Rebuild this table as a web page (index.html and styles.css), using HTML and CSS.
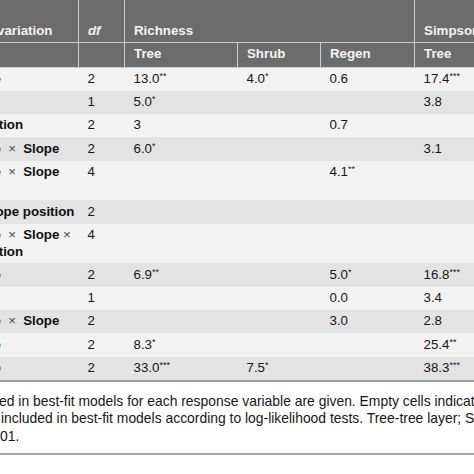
FILE: index.html
```html
<!DOCTYPE html>
<html lang="en">
<head>
<meta charset="utf-8">
<title>ANOVA table</title>
<link rel="stylesheet" href="styles.css">
</head>
<body>
<div class="frame">
  <table class="anova">
    <colgroup>
      <col class="c-src"><col class="c-df"><col class="c-rt"><col class="c-rs"><col class="c-rr"><col class="c-st"><col class="c-ss"><col class="c-sr">
    </colgroup>
    <thead>
      <tr class="h1">
        <th>Source of variation</th>
        <th><i>df</i></th>
        <th colspan="3">Richness</th>
        <th colspan="3" class="simp">Simpson's index</th>
      </tr>
      <tr class="h2">
        <th></th>
        <th></th>
        <th>Tree</th>
        <th>Shrub</th>
        <th>Regen</th>
        <th>Tree</th>
        <th>Shrub</th>
        <th>Regen</th>
      </tr>
    </thead>
    <tbody>
      <tr><td class="src">Landscape</td><td>2</td><td>13.0<sup>**</sup></td><td>4.0<sup>*</sup></td><td>0.6</td><td>17.4<sup>***</sup></td><td></td><td></td></tr>
      <tr><td class="src">Slope</td><td>1</td><td>5.0<sup>*</sup></td><td></td><td></td><td>3.8</td><td></td><td></td></tr>
      <tr><td class="src">Slope position</td><td>2</td><td>3</td><td></td><td>0.7</td><td></td><td></td><td></td></tr>
      <tr><td class="src">Landscape <span class="x">×</span> Slope</td><td>2</td><td>6.0<sup>*</sup></td><td></td><td></td><td>3.1</td><td></td><td></td></tr>
      <tr><td class="src">Landscape <span class="x">×</span> Slope position</td><td>4</td><td></td><td></td><td>4.1<sup>**</sup></td><td></td><td></td><td></td></tr>
      <tr><td class="src">Slope <span class="x tight">×</span> Slope position</td><td>2</td><td></td><td></td><td></td><td></td><td></td><td></td></tr>
      <tr><td class="src">Landscape <span class="x">×</span> Slope <span class="x tight">×</span> Slope position</td><td>4</td><td></td><td></td><td></td><td></td><td></td><td></td></tr>
      <tr><td class="src">Landscape</td><td>2</td><td>6.9<sup>**</sup></td><td></td><td>5.0<sup>*</sup></td><td>16.8<sup>***</sup></td><td></td><td></td></tr>
      <tr><td class="src">Slope</td><td>1</td><td></td><td></td><td>0.0</td><td>3.4</td><td></td><td></td></tr>
      <tr><td class="src">Landscape <span class="x">×</span> Slope</td><td>2</td><td></td><td></td><td>3.0</td><td>2.8</td><td></td><td></td></tr>
      <tr><td class="src">Landscape</td><td>2</td><td>8.3<sup>*</sup></td><td></td><td></td><td>25.4<sup>**</sup></td><td></td><td></td></tr>
      <tr><td class="src">Landscape</td><td>2</td><td>33.0<sup>***</sup></td><td>7.5<sup>*</sup></td><td></td><td>38.3<sup>***</sup></td><td></td><td></td></tr>
    </tbody>
  </table>
</div>
<div class="note">
  <div class="line l1">ed in best-fit models for each response variable are given. Empty cells indicate that</div>
  <div class="line l2">included in best-fit models according to log-likelihood tests. Tree-tree layer; Shrub-shrub layer</div>
  <div class="line l3">01.</div>
</div>
</body>
</html>
```

FILE: styles.css
```css
html, body {
  margin: 0;
  padding: 0;
  background: #ffffff;
}

body {
  width: 474px;
  height: 474px;
  overflow: hidden;
  font-family: "Liberation Sans", Arial, sans-serif;
  font-size: 13.3px;
  color: #161616;
}

.frame {
  margin-left: -78px;
}

.anova {
  border-collapse: collapse;
  table-layout: fixed;
  width: 742px;
}

.c-src { width: 156px; }
.c-df { width: 46px; }
.c-rt { width: 113px; }
.c-rs { width: 83px; }
.c-rr { width: 94px; }
.c-st { width: 90px; }
.c-ss { width: 80px; }
.c-sr { width: 80px; }

.anova thead th {
  background: #6c6c6c;
  color: #f3f3f3;
  font-weight: bold;
  text-align: left;
  line-height: 16.5px;
  padding: 0 0 0 9px;
  border: 1px solid #cdcdcd;
  white-space: nowrap;
}

.anova thead .h1 th {
  border-top: 0;
  height: 42px;
  vertical-align: bottom;
  padding-bottom: 2px;
  box-sizing: border-box;
}

.anova thead .h2 th {
  height: 25px;
  vertical-align: middle;
  box-sizing: border-box;
}

.anova tbody td {
  padding: 3.4px 0 3.4px 9px;
  line-height: 16.5px;
  vertical-align: top;
  white-space: nowrap;
}

.anova tbody tr:nth-child(odd) { background: #f2f2f2; }
.anova tbody tr:nth-child(even) { background: #e3e3e3; }

.anova tbody td.src {
  font-weight: bold;
  color: #101010;
  white-space: normal;
  padding-right: 1px;
}

.x {
  font-weight: normal;
  color: #4a4a4a;
  margin: 0 3.5px;
}

.x.tight {
  margin: 0;
}

.anova sup {
  font-size: 9px;
  line-height: 0;
  vertical-align: 4px;
}

.anova tbody tr:last-child td {
  border-bottom: 2px solid #999999;
}

.note {
  padding: 11px 0 8px 0;
  border-bottom: 2px solid #a6a6a6;
  font-size: 13.9px;
  line-height: 17.5px;
  white-space: nowrap;
  color: #161616;
}

.l1 { margin-left: -1px; }
.l2 { margin-left: 1px; }
```
